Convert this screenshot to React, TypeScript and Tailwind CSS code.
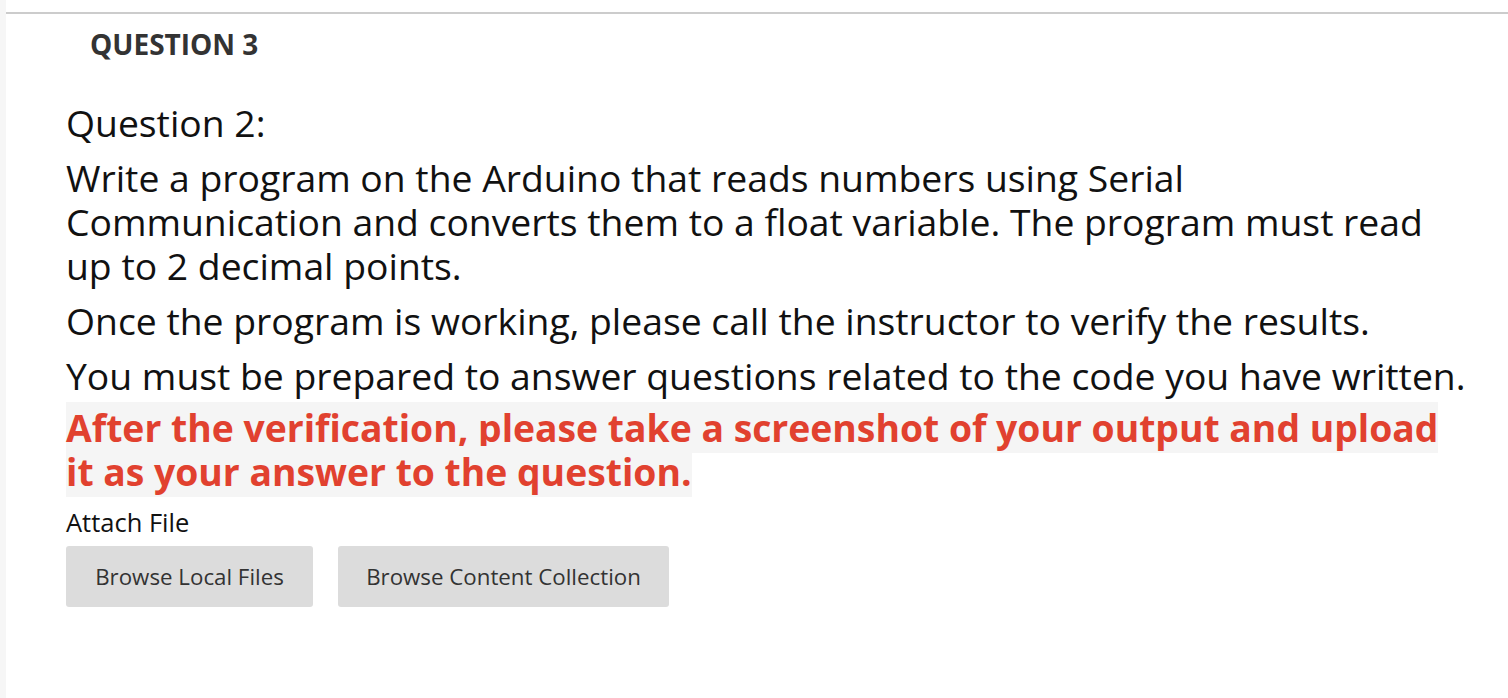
import React from 'react';

const font = { fontFamily: '"Open Sans", "Noto Sans", sans-serif' };

const Paragraph: React.FC<{ children: React.ReactNode; className?: string }> = ({ children, className = '' }) => (
  <p className={`text-[37.3px] leading-[44px] text-[#111] ${className}`}>{children}</p>
);

export default function App() {
  return (
    <div className="flex min-h-[698px] bg-white" style={font}>
      <div className="w-[6px] shrink-0 bg-[#f6f6f6]" />
      <div className="flex-1 pt-[12px]">
        <div className="border-t-2 border-[#cccccc]">
          <h2 className="pl-[84px] pt-[13px] text-[28px] font-bold leading-[34px] text-[#333]">QUESTION 3</h2>

          <div className="pl-[60px] pr-[20px] pt-[40px]">
            <Paragraph className="mb-[11px]">Question 2:</Paragraph>
            <Paragraph className="mb-[11px]">
              Write a program on the Arduino that reads numbers using Serial
              <br />
              Communication and converts them to a float variable. The program must read
              <br />
              up to 2 decimal points.
            </Paragraph>
            <Paragraph className="mb-[11px]">Once the program is working, please call the instructor to verify the results.</Paragraph>
            <Paragraph className="mb-[8px]">You must be prepared to answer questions related to the code you have written.</Paragraph>
            <p className="text-[37.3px] leading-[44px] font-bold text-[#e1412f]">
              <span className="bg-[#f5f5f5] box-decoration-clone">
                After the verification, please take a screenshot of your output and upload
                <br />
                it as your answer to the question.
              </span>
            </p>

            <div className="mt-[12px] text-[25.5px] leading-[32px] text-[#111]">Attach File</div>
            <div className="mt-[8px] flex gap-[25px]">
              <button className="h-[61px] w-[247px] rounded-[3px] bg-[#dcdcdc] text-[22.3px] text-[#333]">Browse Local Files</button>
              <button className="h-[61px] w-[331px] rounded-[3px] bg-[#dcdcdc] text-[22.3px] text-[#333]">Browse Content Collection</button>
            </div>
          </div>
        </div>
      </div>
    </div>
  );
}
